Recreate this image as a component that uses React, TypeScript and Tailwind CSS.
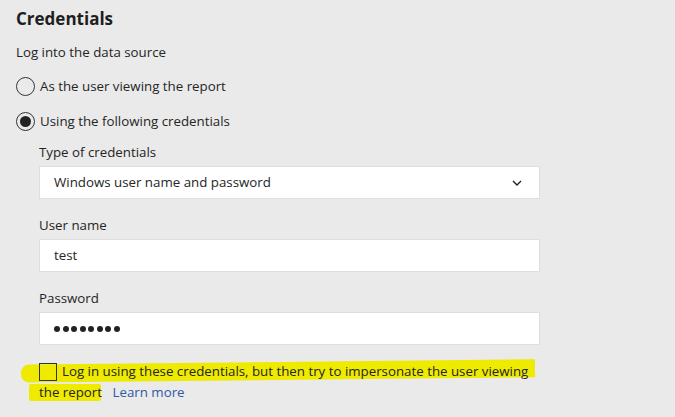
const font = { fontFamily: '"Open Sans", "Noto Sans", sans-serif' };

function Radio({ checked, label }: { checked?: boolean; label: string }) {
  return (
    <label className="flex h-[35px] items-center gap-[5px]">
      <span className="flex h-[19px] w-[19px] items-center justify-center rounded-full border border-[#333]">
        {checked && <span className="h-[11px] w-[11px] rounded-full bg-[#222]" />}
      </span>
      <span>{label}</span>
    </label>
  );
}

function Field({ label, children }: { label: string; children: React.ReactNode }) {
  return (
    <div className="flex flex-col">
      <div className="flex h-[27px] items-center">{label}</div>
      <div className="flex h-[33px] w-[501px] items-center border border-[#dedede] bg-white px-[14px]">
        {children}
      </div>
    </div>
  );
}

export default function App() {
  return (
    <div
      className="h-[417px] w-[675px] overflow-hidden bg-[#eaeaea] pl-4 pt-[7px] text-[13.3px] text-[#252525]"
      style={font}
    >
      <h1 className="text-[17px] font-bold leading-[24px] text-[#1e1e1e]">Credentials</h1>
      <div className="mt-[12px] leading-[18px]">Log into the data source</div>
      <div className="mt-[8px]">
        <Radio label="As the user viewing the report" />
        <Radio checked label="Using the following credentials" />
      </div>
      <div className="flex flex-col gap-[13px] pl-[23px]">
        <Field label="Type of credentials">
          <span className="flex-1">Windows user name and password</span>
          <svg width="10" height="6" viewBox="0 0 10 6" className="mr-[3px]">
            <path d="M1 1l4 4 4-4" fill="none" stroke="#222" strokeWidth="1.4" />
          </svg>
        </Field>
        <Field label="User name">
          <span>test</span>
        </Field>
        <Field label="Password">
          <span className="flex gap-[2.5px]">
            {Array.from({ length: 8 }).map((_, i) => (
              <span key={i} className="h-[6px] w-[6px] rounded-full bg-[#222]" />
            ))}
          </span>
        </Field>
      </div>
      <div className="relative mt-[16px] pl-[23px] leading-[21px]">
        <span className="absolute left-[5px] top-[1px] h-[18px] w-[514px] -rotate-[0.6deg] rounded-l-[8px] bg-[#eeea00]" />
        <span className="absolute left-[13px] top-[23px] h-[17px] w-[72px] rounded-[2px] bg-[#eeea00]" />
        <div className="relative flex items-center gap-[5px]">
          <span className="h-[18px] w-[18px] border border-[#333]" />
          <span>Log in using these credentials, but then try to impersonate the user viewing</span>
        </div>
        <div className="relative">
          the report <a className="ml-[7px] text-[#2d59a6]">Learn more</a>
        </div>
      </div>
    </div>
  );
}
